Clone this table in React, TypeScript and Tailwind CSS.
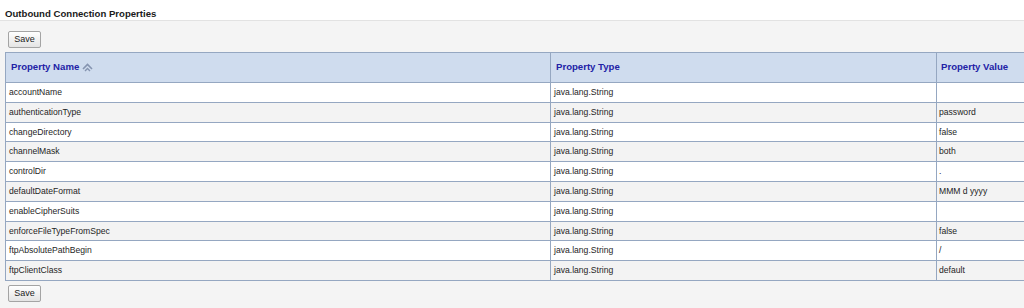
const rows: [string, string, string][] = [
  ["accountName", "java.lang.String", ""],
  ["authenticationType", "java.lang.String", "password"],
  ["changeDirectory", "java.lang.String", "false"],
  ["channelMask", "java.lang.String", "both"],
  ["controlDir", "java.lang.String", "."],
  ["defaultDateFormat", "java.lang.String", "MMM d yyyy"],
  ["enableCipherSuits", "java.lang.String", ""],
  ["enforceFileTypeFromSpec", "java.lang.String", "false"],
  ["ftpAbsolutePathBegin", "java.lang.String", "/"],
  ["ftpClientClass", "java.lang.String", "default"],
];

function SaveButton() {
  return (
    <button className="flex h-[17px] w-[33px] items-center justify-center rounded-[2px] border border-[#a4a4a4] bg-gradient-to-b from-white to-[#e4e4e4] text-[9px] text-[#222]">
      Save
    </button>
  );
}

function SortIcon() {
  return (
    <svg width="11" height="9" viewBox="0 0 11 9" className="ml-[3px]">
      <path d="M1 6 L5.5 1.5 L10 6" fill="none" stroke="#8594b0" strokeWidth="1.6" />
      <path d="M3 8 L5.5 5.5 L8 8" fill="none" stroke="#8594b0" strokeWidth="1.4" />
    </svg>
  );
}

export default function App() {
  return (
    <div className="h-[308px] w-[1024px] overflow-hidden bg-[#f4f4f4] font-['Liberation_Sans',Arial,sans-serif] text-[#1e1e1e]">
      <div className="h-[21px] border-b border-[#e2e2e2] bg-white pl-[5px] pt-[8px] text-[9.6px] font-bold leading-[11px] text-[#1a1a1a]">
        Outbound Connection Properties
      </div>

      <div className="pl-[8px] pt-[10px]">
        <SaveButton />
      </div>

      <div className="ml-[5px] mt-[4px] w-[1040px] border border-[#95a7c1]">
        <div className="flex h-[29px] bg-[#cfdcee] text-[9.6px] font-bold text-[#2222a6]">
          <div className="flex w-[544px] items-center pl-[5px]">
            Property Name
            <SortIcon />
          </div>
          <div className="flex w-[386px] items-center border-l border-[#95a7c1] pl-[5px]">
            Property Type
          </div>
          <div className="flex flex-1 items-center border-l border-[#95a7c1] pl-[4px]">
            Property Value
          </div>
        </div>
        {rows.map(([name, type, value], i) => (
          <div
            key={name}
            className={
              i % 2 === 0
                ? "flex h-[19.8px] border-t border-[#95a7c1] bg-white text-[8.6px]"
                : "flex h-[19.8px] border-t border-[#95a7c1] bg-[#f3f3f3] text-[8.6px]"
            }
          >
            <div className="flex w-[544px] items-center pl-[3px]">{name}</div>
            <div className="flex w-[386px] items-center border-l border-[#95a7c1] pl-[3px]">
              {type}
            </div>
            <div className="flex flex-1 items-center border-l border-[#95a7c1] pl-[2px]">
              {value}
            </div>
          </div>
        ))}
      </div>

      <div className="pl-[8px] pt-[4px]">
        <SaveButton />
      </div>
    </div>
  );
}
